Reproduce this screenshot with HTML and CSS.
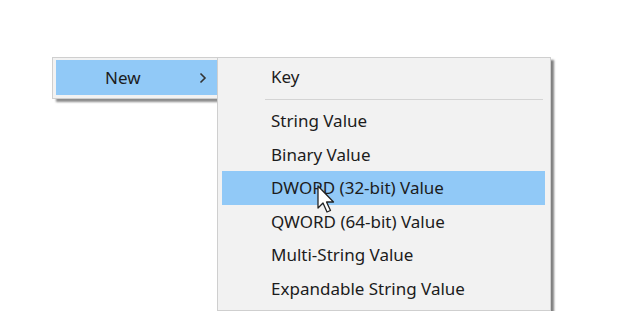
FILE: index.html
```html
<!DOCTYPE html>
<html lang="en">
<head>
    <meta charset="UTF-8">
    <title>New menu</title>
    <link rel="stylesheet" href="styles.css">
</head>
<body>

    <div class="menus">
        <div class="menu parent-menu">
            <div class="item active">
                <span class="label">New</span>
                <svg class="chevron" width="8" height="12" viewBox="0 0 8 12">
                    <polyline points="1.5,1.5 6,6 1.5,10.5" fill="none" stroke="#333" stroke-width="1.6"/>
                </svg>
            </div>
        </div>

        <div class="menu sub-menu">
            <div class="item">Key</div>
            <div class="separator"></div>
            <div class="item">String Value</div>
            <div class="item">Binary Value</div>
            <div class="item active">DWORD (32-bit) Value</div>
            <div class="item">QWORD (64-bit) Value</div>
            <div class="item">Multi-String Value</div>
            <div class="item">Expandable String Value</div>

            <!-- mouse pointer sits over the menu -->
            <svg class="pointer" width="20" height="30" viewBox="0 0 20 30">
                <path d="M1 1 L1 23 L6 18 L10 27 L13.5 25.5 L9.5 17 L16.5 17 Z" fill="#fff" stroke="#222" stroke-width="1.3" stroke-linejoin="round"/>
            </svg>
        </div>
    </div>

</body>
</html>
```

FILE: styles.css
```css
body {
    margin: 0;
    background-color: white;
    font-family: "Noto Sans", "Open Sans", sans-serif;
    color: #1c1c1c;
}
.menus {
    display: flex;
    align-items: flex-start;
    padding: 57px 0 0 52px;
}
.menu {
    background-color: #f2f2f2;
    border: 1px solid #cfcfcf;
}
.parent-menu {
    width: 161px;
    padding: 2px 0 3px 3px;
    box-shadow: 4px 3px 2px rgba(0, 0, 0, 0.45);
}
.parent-menu .item {
    height: 35px;
    display: flex;
    align-items: center;
    padding-left: 49px;
    padding-right: 10px;
}
.parent-menu .label {
    flex: 1;
}
.sub-menu {
    position: relative;
    margin-left: -1px;
    width: 323px;
    padding: 2px 5px 5px 4px;
    box-shadow: 3px 3px 2px rgba(0, 0, 0, 0.5);
}
.item {
    font-size: 17px;
    height: 33.5px;
    line-height: 33.5px;
    padding-left: 49px;
    white-space: nowrap;
}
.sub-menu .item:first-child {
    height: 34px;
    line-height: 34px;
}
.item.active {
    background-color: #91c9f7;
}
.separator {
    height: 1px;
    margin: 5px 2px 4px 43px;
    background-color: #d4d4d4;
}
.pointer {
    position: absolute;
    left: 99px;
    top: 127px;
}
```
